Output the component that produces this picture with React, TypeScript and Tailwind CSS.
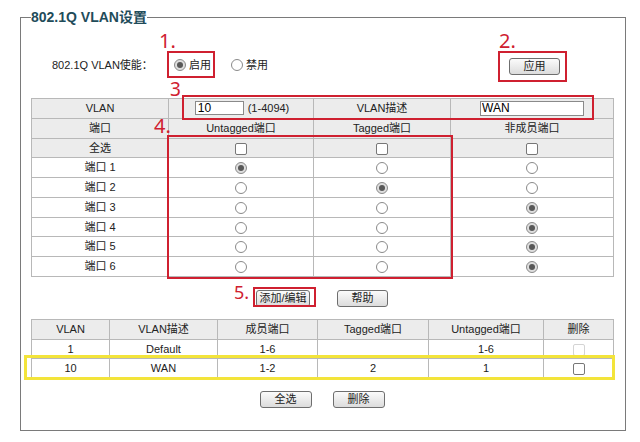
import React from "react";

const ports = [
  { name: "端口 1", pick: 0 },
  { name: "端口 2", pick: 1 },
  { name: "端口 3", pick: 2 },
  { name: "端口 4", pick: 2 },
  { name: "端口 5", pick: 2 },
  { name: "端口 6", pick: 2 },
];

const vlans = [
  { id: "1", desc: "Default", member: "1-6", tagged: "", untagged: "1-6", locked: true },
  { id: "10", desc: "WAN", member: "1-2", tagged: "2", untagged: "1", locked: false },
];

function Radio({ on }: { on?: boolean }) {
  return (
    <span
      className={`inline-flex h-[12px] w-[12px] items-center justify-center rounded-full border border-[#8a8a8a] align-middle ${
        on ? "bg-[#dedede]" : "bg-white"
      }`}
    >
      {on && <span className="h-[6px] w-[6px] rounded-full bg-[#585858]" />}
    </span>
  );
}

function Check({ locked }: { locked?: boolean }) {
  return (
    <span
      className={`inline-block h-[12px] w-[12px] rounded-[2px] border bg-white align-middle ${
        locked ? "border-[#d4d4d4]" : "border-[#777]"
      }`}
    />
  );
}

function Btn({ label, w = "w-[51px]" }: { label: string; w?: string }) {
  return (
    <button
      className={`h-[17px] ${w} rounded-[3px] border border-[#6e6e6e] bg-gradient-to-b from-[#fbfbfb] to-[#dcdcdc] text-[11px] leading-none text-[#222]`}
    >
      {label}
    </button>
  );
}

function Box({ className }: { className: string }) {
  return <div className={`pointer-events-none absolute border-2 border-[#cf2030] ${className}`} />;
}

function Num({ text, className }: { text: string; className: string }) {
  return (
    <span
      className={`pointer-events-none absolute font-['Noto_Sans',sans-serif] leading-none text-[#cf2030] ${className}`}
    >
      {text}
    </span>
  );
}

const cell = "border border-[#b8b8b8] p-0 text-center align-middle";

export default function App() {
  return (
    <div className="relative h-[442px] w-[640px] overflow-hidden bg-white font-['Liberation_Sans','Noto_Sans_CJK_SC',sans-serif] text-[11px] text-[#222]">
      <fieldset className="ml-[20px] mr-[14px] mt-[9px] h-[422px] border border-[#7a7a7a]">
        <legend className="ml-[10px] text-[14px] font-bold leading-[16px] text-[#1f4c5a]">
          802.1Q VLAN设置
        </legend>

        <div className="mt-[26px] flex h-[28px] items-center">
          <span className="ml-[31px] w-[122px]">802.1Q VLAN使能：</span>
          <label className="flex items-center gap-[3px]">
            <Radio on />
            <span>启用</span>
          </label>
          <label className="ml-[20px] flex items-center gap-[3px]">
            <Radio />
            <span>禁用</span>
          </label>
          <div className="ml-auto mr-[65px] mt-[2px]">
            <Btn label="应用" />
          </div>
        </div>

        <table className="ml-[10px] mt-[19px] w-[582px] table-fixed border-collapse">
          <colgroup>
            <col className="w-[137px]" />
            <col className="w-[145px]" />
            <col className="w-[137px]" />
            <col className="w-[163px]" />
          </colgroup>
          <tbody>
            <tr className="h-[19.75px] bg-[#ececec]">
              <td className={cell}>VLAN</td>
              <td className={cell}>
                <div className="flex items-center justify-center gap-[4px] pl-[2px]">
                  <input
                    readOnly
                    value="10"
                    className="h-[14px] w-[49px] border border-[#8a8a8a] bg-white px-[2px] text-[12px] leading-none text-black outline-none"
                  />
                  <span>(1-4094)</span>
                </div>
              </td>
              <td className={cell}>VLAN描述</td>
              <td className={cell}>
                <input
                  readOnly
                  value="WAN"
                  className="h-[15px] w-[104px] border border-[#8a8a8a] bg-white px-[1px] text-[12px] leading-none text-black outline-none"
                />
              </td>
            </tr>
            <tr className="h-[19.75px] bg-[#ececec]">
              <td className={cell}>端口</td>
              <td className={cell}>Untagged端口</td>
              <td className={cell}>Tagged端口</td>
              <td className={cell}>非成员端口</td>
            </tr>
            <tr className="h-[19.75px] bg-[#ececec]">
              <td className={cell}>全选</td>
              <td className={cell}><Check /></td>
              <td className={cell}><Check /></td>
              <td className={cell}><Check /></td>
            </tr>
            {ports.map((p) => (
              <tr key={p.name} className="h-[19.75px] bg-white">
                <td className={cell}>{p.name}</td>
                {[0, 1, 2].map((i) => (
                  <td key={i} className={cell}>
                    <Radio on={p.pick === i} />
                  </td>
                ))}
              </tr>
            ))}
          </tbody>
        </table>

        <div className="ml-[10px] mt-[13px] flex w-[582px] justify-center gap-[27px]">
          <Btn label="添加/编辑" w="w-[54px]" />
          <Btn label="帮助" />
        </div>

        <table className="ml-[10px] mt-[12px] w-[582px] table-fixed border-collapse">
          <colgroup>
            <col className="w-[78px]" />
            <col className="w-[108px]" />
            <col className="w-[100px]" />
            <col className="w-[111px]" />
            <col className="w-[115px]" />
            <col className="w-[70px]" />
          </colgroup>
          <tbody>
            <tr className="h-[19.75px] bg-[#ececec]">
              <td className={cell}>VLAN</td>
              <td className={cell}>VLAN描述</td>
              <td className={cell}>成员端口</td>
              <td className={cell}>Tagged端口</td>
              <td className={cell}>Untagged端口</td>
              <td className={cell}>删除</td>
            </tr>
            {vlans.map((v) => (
              <tr key={v.id} className="h-[19.75px] bg-white">
                <td className={cell}>{v.id}</td>
                <td className={cell}>{v.desc}</td>
                <td className={cell}>{v.member}</td>
                <td className={cell}>{v.tagged}</td>
                <td className={cell}>{v.untagged}</td>
                <td className={cell}><Check locked={v.locked} /></td>
              </tr>
            ))}
          </tbody>
        </table>

        <div className="ml-[10px] mt-[12px] flex w-[582px] justify-center gap-[21px]">
          <Btn label="全选" w="w-[52px]" />
          <Btn label="删除" w="w-[52px]" />
        </div>
      </fieldset>

      {/* annotation marks drawn over the page */}
      <Num text="1." className="left-[159px] top-[31px] text-[20px]" />
      <Box className="left-[167px] top-[51px] h-[27px] w-[48px]" />
      <Num text="2." className="left-[499px] top-[31px] text-[20px]" />
      <Box className="left-[498px] top-[51px] h-[31px] w-[69px]" />
      <Num text="3" className="left-[170px] top-[80px] text-[19px]" />
      <Box className="left-[182px] top-[95px] h-[25px] w-[412px]" />
      <Num text="4." className="left-[154px] top-[116px] text-[20px]" />
      <Box className="left-[167px] top-[135px] h-[144px] w-[286px]" />
      <Num text="5." className="left-[234px] top-[283px] text-[18px]" />
      <Box className="left-[253px] top-[287px] h-[20px] w-[63px]" />
      <div className="pointer-events-none absolute left-[24px] top-[355px] h-[25px] w-[591px] border-[3px] border-[#f3e43a]" />
    </div>
  );
}
